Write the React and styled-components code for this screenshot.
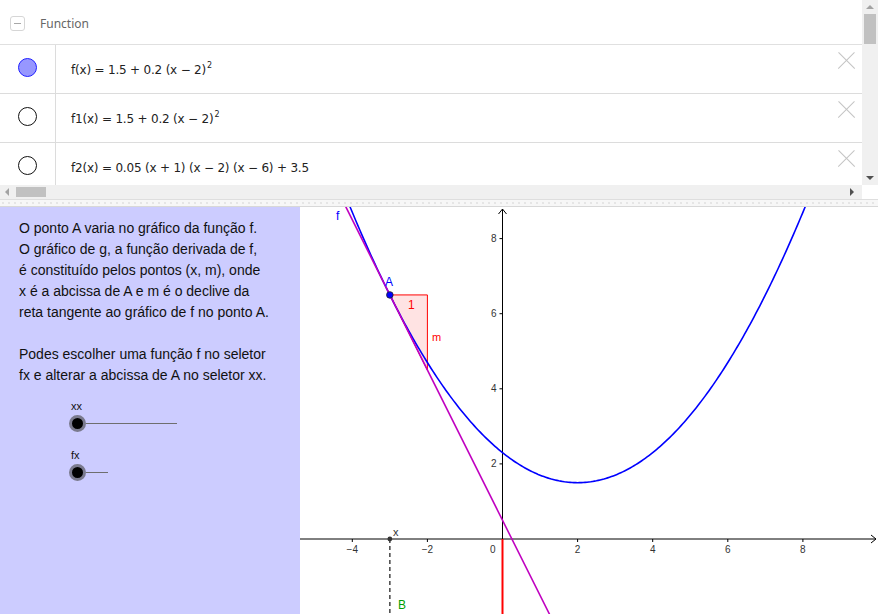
import React from 'react';
import styled, { createGlobalStyle } from 'styled-components';

const GlobalStyle = createGlobalStyle`
  html, body {
    margin: 0;
    padding: 0;
    background: #ffffff;
  }
  body {
    font-family: "Liberation Sans", Arial, sans-serif;
  }
`;

const Page = styled.div`
  width: 878px;
  height: 614px;
  display: flex;
  flex-direction: column;
  overflow: hidden;
`;

const AlgebraPanel = styled.div`
  display: grid;
  grid-template-columns: 1fr 16px;
  grid-template-rows: 185px 14px;
  height: 199px;
  flex: none;
`;

const ListArea = styled.div`
  overflow: hidden;
  display: flex;
  flex-direction: column;
`;

const Header = styled.div`
  height: 45px;
  flex: none;
  display: flex;
  align-items: center;
  padding-left: 10px;
  padding-top: 2px;
  gap: 15px;
  border-bottom: 1px solid #e0e0e0;
  box-sizing: border-box;
  font-family: "Noto Sans", "Open Sans", sans-serif;
  font-size: 12px;
  color: #666666;
`;

const CollapseButton = styled.div`
  width: 13px;
  height: 13px;
  border: 1px solid #d6d6d6;
  border-radius: 3px;
  display: flex;
  align-items: center;
  justify-content: center;
  margin-top: 1px;

  &::after {
    content: '';
    width: 7px;
    height: 1px;
    background: #a8a8a8;
  }
`;

const Row = styled.div`
  height: 49px;
  flex: none;
  display: flex;
  border-bottom: 1px solid #dcdcdc;
  box-sizing: border-box;
`;

const MarbleCell = styled.div`
  width: 56px;
  flex: none;
  border-right: 1px solid #dcdcdc;
  display: flex;
  align-items: center;
  justify-content: center;
  padding-bottom: 3px;
  box-sizing: border-box;
`;

const Marble = styled.div`
  width: 19px;
  height: 19px;
  border-radius: 50%;
  box-sizing: border-box;
  border: 1px solid ${(p) => (p.$on ? '#2020ff' : '#111111')};
  background: ${(p) => (p.$on ? '#9797ff' : '#ffffff')};
`;

const FormulaCell = styled.div`
  flex: 1;
  display: flex;
  align-items: center;
  justify-content: space-between;
  padding-left: 15px;
  padding-right: 7px;
`;

const Formula = styled.div`
  font-family: "DejaVu Sans", sans-serif;
  font-size: 12px;
  letter-spacing: -0.2px;
  color: #222222;
  white-space: pre;
  padding-top: 2px;
`;

const Sup = styled.sup`
  font-size: 8px;
  vertical-align: 6px;
  line-height: 0;
  margin-left: 1px;
`;

const DeleteButton = styled.div`
  align-self: flex-start;
  margin-top: 7px;
  width: 17px;
  height: 17px;
  position: relative;

  &::before,
  &::after {
    content: '';
    position: absolute;
    left: -3px;
    top: 8px;
    width: 23px;
    height: 1.4px;
    background: #c4c4c4;
    transform: rotate(45deg);
  }
  &::after {
    transform: rotate(-45deg);
  }
`;

const VScroll = styled.div`
  background: #f0f0f0;
  display: flex;
  flex-direction: column;
  align-items: center;
  padding-top: 5px;
  box-sizing: border-box;
`;

const HScroll = styled.div`
  background: #f0f0f0;
  display: flex;
  align-items: center;
  padding-left: 5px;
  padding-right: 8px;
  box-sizing: border-box;
`;

const Corner = styled.div`
  background: #ffffff;
`;

const Arrow = styled.div`
  width: 0;
  height: 0;
  flex: none;
  border: ${(p) => p.$size || 4}px solid transparent;
  ${(p) => p.$dir === 'up' && `border-bottom-color: ${p.$color}; border-top-width: 0;`}
  ${(p) => p.$dir === 'down' && `border-top-color: ${p.$color}; border-bottom-width: 0;`}
  ${(p) => p.$dir === 'left' && `border-right-color: ${p.$color}; border-left-width: 0;`}
  ${(p) => p.$dir === 'right' && `border-left-color: ${p.$color}; border-right-width: 0;`}
`;

const Thumb = styled.div`
  background: #c1c1c1;
  flex: none;
  width: ${(p) => p.$w}px;
  height: ${(p) => p.$h}px;
  margin: ${(p) => p.$m};
`;

const Spacer = styled.div`
  flex: 1;
`;

const Divider = styled.div`
  height: 8px;
  flex: none;
  box-sizing: border-box;
  border-top: 1px solid #dedede;
  border-bottom: 1px solid #d8d8d8;
  background-color: #f7f7f7;
  background-image: radial-gradient(circle, #dcdcdc 0.6px, transparent 0.9px);
  background-size: 6px 6px;
  background-position: 0 0;
`;

const Workspace = styled.div`
  flex: 1;
  display: flex;
  min-height: 0;
`;

const TextPanel = styled.div`
  width: 300px;
  flex: none;
  background: #ccccff;
  padding: 11px 0 0 19px;
  box-sizing: border-box;
  display: flex;
  flex-direction: column;
`;

const Paragraph = styled.p`
  margin: 0 0 21px 0;
  font-size: 14px;
  line-height: 21px;
  color: #111111;
`;

const Sliders = styled.div`
  display: flex;
  flex-direction: column;
  gap: 18px;
  margin-left: 50px;
  margin-top: -7px;
`;

const SliderBlock = styled.div`
  display: flex;
  flex-direction: column;
  gap: 3px;
`;

const SliderLabel = styled.div`
  font-size: 11px;
  line-height: 12px;
  color: #111111;
  padding-left: 2px;
`;

const SliderTrack = styled.div`
  display: flex;
  align-items: center;
  height: 16px;
`;

const Knob = styled.div`
  width: 11px;
  height: 11px;
  border-radius: 50%;
  background: #000000;
  border: 3px solid #7a7a8e;
  flex: none;
`;

const Line = styled.div`
  width: ${(p) => p.$len}px;
  height: 1px;
  background: #6e6e6e;
`;

const GraphView = styled.div`
  flex: 1;
  background: #ffffff;
  overflow: hidden;
`;

const rows = [
  { on: true, text: 'f(x) = 1.5 + 0.2 (x − 2)' },
  { on: false, text: 'f1(x) = 1.5 + 0.2 (x − 2)' },
  { on: false, text: 'f2(x) = 0.05 (x + 1) (x − 2) (x − 6) + 3.5', noSup: true },
];

const W = 578;
const H = 407;
const OX = 202.5;
const OY = 332;
const S = 37.55;
const px = (x) => OX + x * S;
const py = (y) => OY - y * S;

const f = (x) => 1.5 + 0.2 * (x - 2) * (x - 2);

function curvePath() {
  const pts = [];
  for (let x = -5.5; x <= 10; x += 0.05) {
    pts.push(`${px(x).toFixed(2)},${py(f(x)).toFixed(2)}`);
  }
  return 'M' + pts.join(' L');
}

const tickFont = { fontFamily: '"Liberation Sans", Arial, sans-serif', fontSize: 10, fill: '#333' };
const labelFont = { fontFamily: '"Liberation Sans", Arial, sans-serif', fontSize: 12 };

function Graph() {
  const ax = -3;
  const ay = f(ax);
  const m = 0.4 * (ax - 2);
  const tan = (x) => ay + m * (x - ax);
  const xTicks = [-4, -2, 2, 4, 6, 8];
  const yTicks = [2, 4, 6, 8];
  return (
    <svg width={W} height={H} viewBox={`0 0 ${W} ${H}`}>
      <line x1={0} y1={OY} x2={W - 2} y2={OY} stroke="#000" strokeWidth="1" />
      <polyline points={`${W - 7},${OY - 4} ${W - 2},${OY} ${W - 7},${OY + 4}`} fill="none" stroke="#000" />
      <line x1={OX} y1={H} x2={OX} y2={2} stroke="#000" strokeWidth="1" />
      <polyline points={`${OX - 4},${7} ${OX},${2} ${OX + 4},${7}`} fill="none" stroke="#000" />
      {xTicks.map((t) => (
        <g key={t}>
          <line x1={px(t)} y1={OY} x2={px(t)} y2={OY + 3} stroke="#000" />
          <text x={px(t)} y={OY + 14} textAnchor="middle" style={tickFont}>
            {t < 0 ? `−${-t}` : t}
          </text>
        </g>
      ))}
      <text x={OX - 7} y={OY + 14} textAnchor="end" style={tickFont}>0</text>
      {yTicks.map((t) => (
        <g key={t}>
          <line x1={OX - 3} y1={py(t)} x2={OX} y2={py(t)} stroke="#000" />
          <text x={OX - 6} y={py(t) + 3.5} textAnchor="end" style={tickFont}>{t}</text>
        </g>
      ))}
      <polygon
        points={`${px(ax)},${py(ay)} ${px(ax + 1)},${py(ay)} ${px(ax + 1)},${py(ay + m)}`}
        fill="#ffe3e3"
        stroke="#ff0000"
        strokeWidth="1"
      />
      <path d={curvePath()} fill="none" stroke="#0000ff" strokeWidth="1.6" />
      <line x1={px(-6)} y1={py(tan(-6))} x2={px(3)} y2={py(tan(3))} stroke="#c000c0" strokeWidth="1.6" />
      <line x1={OX} y1={OY} x2={OX} y2={H} stroke="#ff0000" strokeWidth="2" />
      <line x1={px(ax)} y1={OY} x2={px(ax)} y2={H} stroke="#444" strokeWidth="1.5" strokeDasharray="4 3" />
      <circle cx={px(ax)} cy={OY} r="2.4" fill="#333" />
      <circle cx={px(ax)} cy={py(ay)} r="3.3" fill="#0000ff" stroke="#222" strokeWidth="0.8" />
      <text x={36} y={13} style={{ ...labelFont, fill: '#0000ff' }}>f</text>
      <text x={85} y={79} style={{ ...labelFont, fill: '#0000ff' }}>A</text>
      <text x={108} y={102} style={{ ...labelFont, fill: '#ff0000' }}>1</text>
      <text x={132} y={134} style={{ ...labelFont, fontSize: 11, fill: '#ff0000' }}>m</text>
      <text x={93} y={329} style={{ ...labelFont, fontSize: 11, fill: '#333' }}>x</text>
      <text x={98} y={402} style={{ ...labelFont, fill: '#00a000' }}>B</text>
    </svg>
  );
}

export default function App() {
  return (
    <>
      <GlobalStyle />
      <Page>
        <AlgebraPanel>
          <ListArea>
            <Header>
              <CollapseButton />
              <span>Function</span>
            </Header>
            {rows.map((r, i) => (
              <Row key={i}>
                <MarbleCell>
                  <Marble $on={r.on} />
                </MarbleCell>
                <FormulaCell>
                  <Formula>
                    {r.text}
                    {!r.noSup && <Sup>2</Sup>}
                  </Formula>
                  <DeleteButton />
                </FormulaCell>
              </Row>
            ))}
          </ListArea>
          <VScroll>
            <Arrow $dir="up" $color="#a3a3a3" />
            <Thumb $w={12} $h={30} $m="5px 0 0 0" />
            <Spacer />
            <Arrow $dir="down" $color="#505050" />
            <Thumb $w={0} $h={5} $m="0" />
          </VScroll>
          <HScroll>
            <Arrow $dir="left" $color="#a3a3a3" />
            <Thumb $w={30} $h={10} $m="0 0 0 7px" />
            <Spacer />
            <Arrow $dir="right" $color="#505050" />
          </HScroll>
          <Corner />
        </AlgebraPanel>
        <Divider />
        <Workspace>
          <TextPanel>
            <Paragraph>
              O ponto A varia no gráfico da função f.
              <br />
              O gráfico de g, a função derivada de f,
              <br />
              é constituído pelos pontos (x, m), onde
              <br />
              x é a abcissa de A e m é o declive da
              <br />
              reta tangente ao gráfico de f no ponto A.
            </Paragraph>
            <Paragraph>
              Podes escolher uma função f no seletor
              <br />
              fx e alterar a abcissa de A no seletor xx.
            </Paragraph>
            <Sliders>
              <SliderBlock>
                <SliderLabel>xx</SliderLabel>
                <SliderTrack>
                  <Knob />
                  <Line $len={91} />
                </SliderTrack>
              </SliderBlock>
              <SliderBlock>
                <SliderLabel>fx</SliderLabel>
                <SliderTrack>
                  <Knob />
                  <Line $len={22} />
                </SliderTrack>
              </SliderBlock>
            </Sliders>
          </TextPanel>
          <GraphView>
            <Graph />
          </GraphView>
        </Workspace>
      </Page>
    </>
  );
}
